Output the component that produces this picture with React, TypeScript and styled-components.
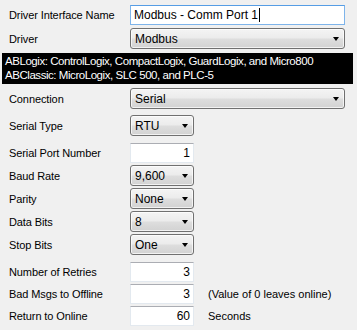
import * as React from "react";
import styled, { createGlobalStyle } from "styled-components";

const GlobalStyle = createGlobalStyle`
  html, body {
    margin: 0;
    padding: 0;
    background: #f0f0f0;
  }
  body {
    font-family: "Liberation Sans", Arial, sans-serif;
    font-size: 11px;
    color: #000;
  }
`;

const PageStyled = styled.div`
  width: 357px;
  height: 330px;
  background: #f0f0f0;
  display: flex;
  flex-direction: column;
  overflow: hidden;
`;

const RowStyled = styled.div<{ $top: number; $h: number }>`
  display: flex;
  flex-direction: row;
  align-items: center;
  margin-top: ${(p) => p.$top}px;
  height: ${(p) => p.$h}px;
  padding-left: 9px;
`;

const Label = styled.div`
  width: 121px;
  flex-shrink: 0;
  white-space: nowrap;
  letter-spacing: -0.1px;
`;

const TextBox = styled.div<{ $w: number; $focus?: boolean; $right?: boolean }>`
  box-sizing: border-box;
  width: ${(p) => p.$w}px;
  height: 100%;
  background: #fff;
  border: 1px solid ${(p) => (p.$focus ? "#7eb4ea" : "#e3e9ef")};
  border-top-color: ${(p) => (p.$focus ? "#569de5" : "#abadb3")};
  display: flex;
  align-items: center;
  justify-content: ${(p) => (p.$right ? "flex-end" : "flex-start")};
  padding: 0 3px;
  font-size: 12px;
  white-space: nowrap;
`;

const Caret = styled.span`
  display: inline-block;
  width: 1px;
  height: 14px;
  background: #000;
  margin-left: 1px;
`;

const Combo = styled.div<{ $w: number }>`
  box-sizing: border-box;
  width: ${(p) => p.$w}px;
  height: 100%;
  border: 1px solid #707070;
  border-radius: 3px;
  background: linear-gradient(#f4f4f4 0%, #ececec 45%, #dddddd 55%, #d2d2d2 100%);
  box-shadow: inset 0 0 0 1px rgba(255, 255, 255, 0.7);
  display: flex;
  align-items: center;
  justify-content: space-between;
  padding: 0 5px 0 4px;
  font-size: 12px;
`;

const Arrow = styled.span`
  width: 0;
  height: 0;
  border-left: 3.5px solid transparent;
  border-right: 3.5px solid transparent;
  border-top: 4px solid #000;
`;

const Note = styled.div`
  margin-left: 14px;
  white-space: nowrap;
`;

const InfoBand = styled.div`
  margin: 4px 4px 0 2px;
  height: 31px;
  background: #000;
  color: #fff;
  font-size: 11.5px;
  letter-spacing: -0.45px;
  line-height: 14px;
  padding: 1px 3px;
  box-sizing: border-box;
  white-space: nowrap;
  overflow: hidden;
`;

const ComboField: React.FC<{ w: number; value: string }> = ({ w, value }) => (
  <Combo $w={w}>
    <span>{value}</span>
    <Arrow />
  </Combo>
);

export default function App() {
  return (
    <PageStyled>
      <GlobalStyle />
      <RowStyled $top={5} $h={20}>
        <Label>Driver Interface Name</Label>
        <TextBox $w={215} $focus>
          Modbus - Comm Port 1<Caret />
        </TextBox>
      </RowStyled>
      <RowStyled $top={3} $h={21}>
        <Label>Driver</Label>
        <ComboField w={215} value="Modbus" />
      </RowStyled>
      <InfoBand>
        ABLogix: ControlLogix, CompactLogix, GuardLogix, and Micro800
        <br />
        ABClassic: MicroLogix, SLC 500, and PLC-5
      </InfoBand>
      <RowStyled $top={4} $h={21}>
        <Label>Connection</Label>
        <ComboField w={215} value="Serial" />
      </RowStyled>
      <RowStyled $top={6} $h={21}>
        <Label>Serial Type</Label>
        <ComboField w={64} value="RTU" />
      </RowStyled>
      <RowStyled $top={7} $h={20}>
        <Label>Serial Port Number</Label>
        <TextBox $w={64} $right>1</TextBox>
      </RowStyled>
      <RowStyled $top={2} $h={21}>
        <Label>Baud Rate</Label>
        <ComboField w={64} value="9,600" />
      </RowStyled>
      <RowStyled $top={2} $h={21}>
        <Label>Parity</Label>
        <ComboField w={64} value="None" />
      </RowStyled>
      <RowStyled $top={2} $h={21}>
        <Label>Data Bits</Label>
        <ComboField w={64} value="8" />
      </RowStyled>
      <RowStyled $top={2} $h={21}>
        <Label>Stop Bits</Label>
        <ComboField w={64} value="One" />
      </RowStyled>
      <RowStyled $top={7} $h={20}>
        <Label>Number of Retries</Label>
        <TextBox $w={64} $right>3</TextBox>
      </RowStyled>
      <RowStyled $top={2} $h={20}>
        <Label>Bad Msgs to Offline</Label>
        <TextBox $w={64} $right>3</TextBox>
        <Note>(Value of 0 leaves online)</Note>
      </RowStyled>
      <RowStyled $top={2} $h={20}>
        <Label>Return to Online</Label>
        <TextBox $w={64} $right>60</TextBox>
        <Note>Seconds</Note>
      </RowStyled>
    </PageStyled>
  );
}
